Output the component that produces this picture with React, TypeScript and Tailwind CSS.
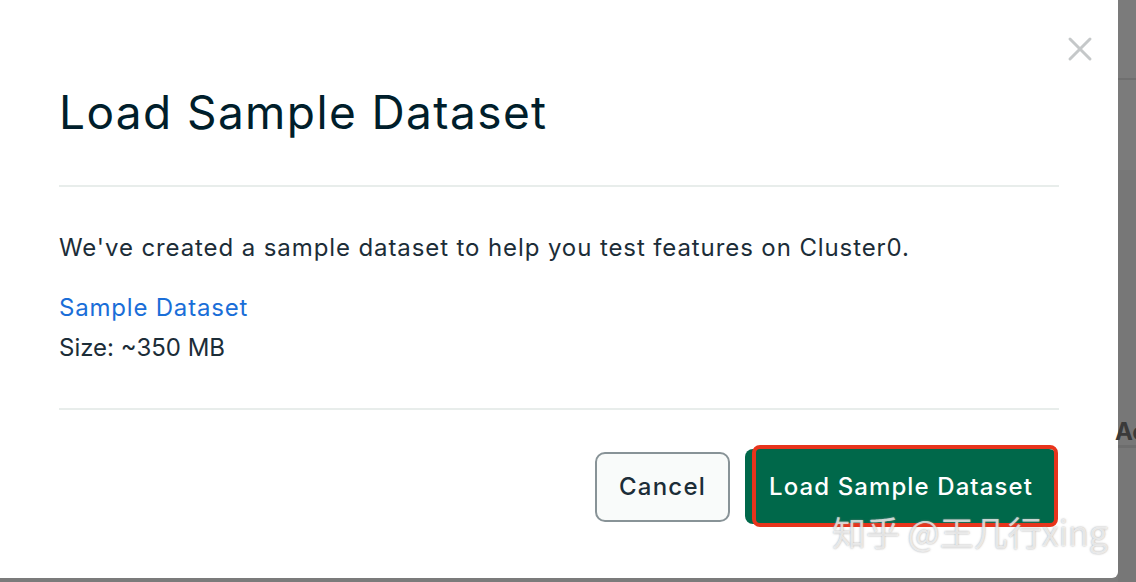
import { X } from 'lucide-react'

export default function App() {
  return (
    <div
      className="w-[1136px] h-[582px] overflow-hidden bg-[#7b7b7b] flex"
      style={{ fontFamily: 'Inter, "Noto Sans CJK SC", sans-serif' }}
    >
      {/* Modal */}
      <div className="relative w-[1118px] h-[578px] bg-white rounded-br-[6px] shrink-0 px-[59px] flex flex-col">
        <button className="absolute right-[18px] top-[29px] text-[#c5c8c9]">
          <X className="w-[40px] h-[40px]" strokeWidth={1.8} />
        </button>

        <h1 className="mt-[84px] text-[46px] leading-[56px] tracking-[1.4px] text-[#001e2b]">
          Load Sample Dataset
        </h1>

        <div className="mt-[45px] h-[2px] bg-[#e8edeb] w-[1000px]" />

        <p className="mt-[45px] text-[24px] leading-[32px] tracking-[0.9px] text-[#1c2d38]">
          We've created a sample dataset to help you test features on Cluster0.
        </p>

        <a className="mt-[28px] text-[24px] leading-[32px] tracking-[0.8px] text-[#1a6ed8]">Sample Dataset</a>
        <p className="mt-[8px] text-[24px] leading-[32px] text-[#1c2d38]">Size: ~350 MB</p>

        <div className="mt-[44px] h-[2px] bg-[#e8edeb] w-[1000px]" />

        {/* Footer */}
        <div className="mt-[39px] w-[998px] flex justify-end items-center gap-[15px]">
          <button className="w-[135px] h-[70px] rounded-[10px] border-2 border-[#889397] bg-[#f9fbfa] text-[24px] font-medium tracking-[1.2px] text-[#1c2d38]">
            Cancel
          </button>
          <div className="relative">
            <button className="w-[312px] h-[75px] rounded-[8px] bg-[#00684a] text-white text-[24px] font-medium tracking-[1.1px]">
              Load Sample Dataset
            </button>
            <div className="absolute left-[7px] -top-[4px] w-[306px] h-[82px] rounded-[8px] border-[4px] border-[#e8341c] pointer-events-none" />
          </div>
        </div>

        {/* Watermark */}
        <div
          className="absolute left-[832px] top-[512px] text-[34px] leading-[40px] text-[#ffffff]/70 [text-shadow:0_0_2px_rgba(140,140,140,0.8)] pointer-events-none"
          style={{ fontFamily: '"Noto Sans CJK SC", sans-serif' }}
        >
          知乎 @王几行xing
        </div>
      </div>

      {/* Background page peeking on the right */}
      <div className="flex-1 h-[582px] flex flex-col">
        <div className="h-[78px]" />
        <div className="h-[2px] bg-[#6f6f6f]" />
        <div className="h-[90px]" />
        <div className="flex-1 bg-[#777777] relative">
          <div className="absolute left-[-3px] top-[244px] text-[24px] text-[#3a3a3a] font-bold">Ac</div>
          <div className="absolute left-0 right-0 top-[275px] h-[3px] bg-[#6d6d6d]" />
        </div>
      </div>
    </div>
  )
}
